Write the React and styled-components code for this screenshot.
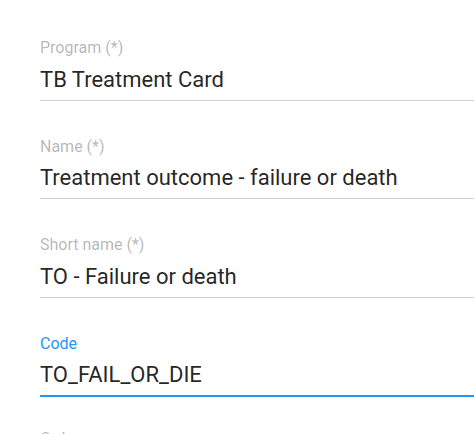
import React from "react";
import styled, { createGlobalStyle } from "styled-components";

const GlobalStyle = createGlobalStyle`
  html, body {
    margin: 0;
    padding: 0;
    background: #fff;
    font-family: Roboto, "Liberation Sans", sans-serif;
  }
`;

const Form = styled.form`
  display: flex;
  flex-direction: column;
  padding: 38px 0 0 40px;
  overflow: hidden;
`;

const Field = styled.div`
  display: flex;
  flex-direction: column;
  margin-bottom: ${(p) => (p.focused ? "33px" : "36px")};
`;

const Label = styled.label`
  font-size: 16px;
  line-height: 19px;
  color: ${(p) => (p.focused ? "#2196f3" : "rgba(0, 0, 0, 0.3)")};
`;

const Value = styled.div`
  margin-top: 10.5px;
  font-size: 22px;
  line-height: 24px;
  color: rgba(0, 0, 0, 0.87);
  padding-bottom: 8px;
  border-bottom: ${(p) => (p.focused ? "2px solid #2196f3" : "1px solid #d0d0d0")};
  margin-bottom: ${(p) => (p.focused ? "-1px" : "0")};
  white-space: nowrap;
`;

const fields = [
  { label: "Program (*)", value: "TB Treatment Card" },
  { label: "Name (*)", value: "Treatment outcome - failure or death" },
  { label: "Short name (*)", value: "TO - Failure or death" },
  { label: "Code", value: "TO_FAIL_OR_DIE", focused: true },
  { label: "Order", value: "" },
];

export default function App() {
  return (
    <>
      <GlobalStyle />
      <Form onSubmit={(e) => e.preventDefault()}>
        {fields.map((f) => (
          <Field key={f.label} focused={f.focused}>
            <Label focused={f.focused}>{f.label}</Label>
            <Value focused={f.focused}>{f.value}</Value>
          </Field>
        ))}
      </Form>
    </>
  );
}
